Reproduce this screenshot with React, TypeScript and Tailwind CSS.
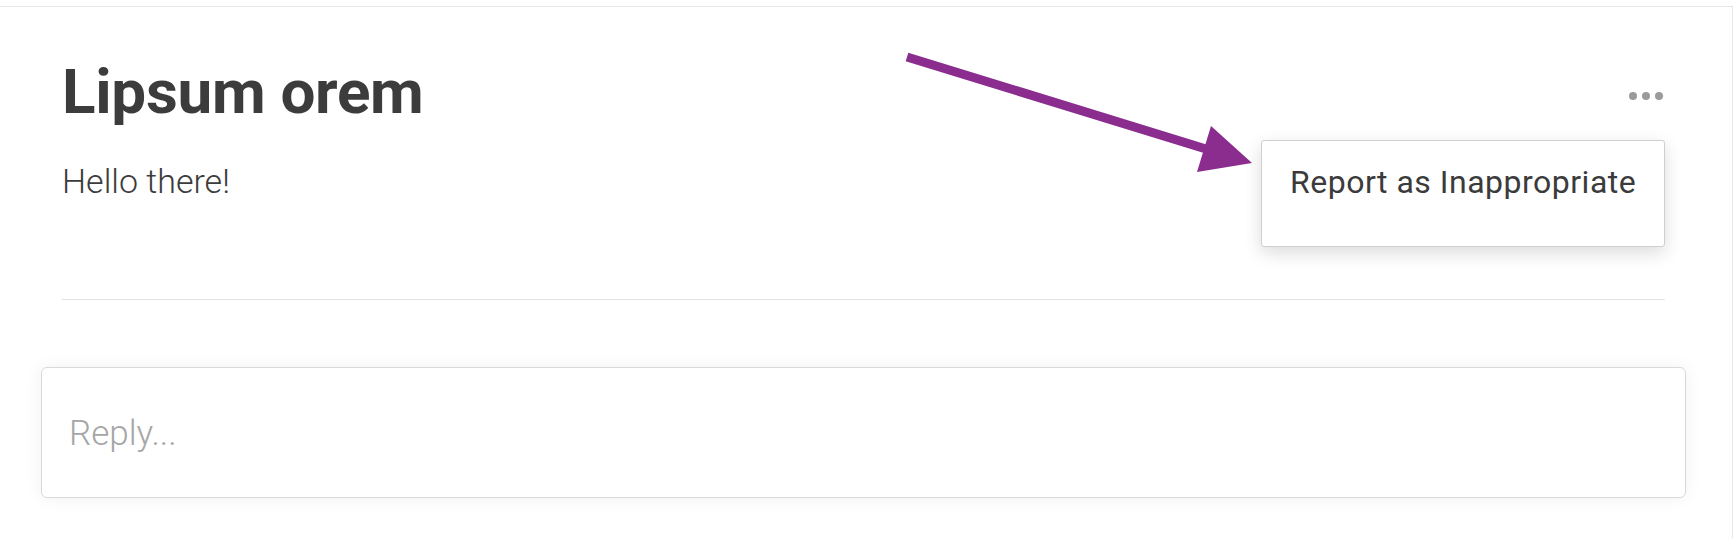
export default function App() {
    return (
        <div className="relative min-h-screen bg-white pt-[6px] font-['Roboto',sans-serif] text-[#3c3c3c]">
            <div className="relative w-[1733px] border-t border-r border-[#e6e6e6] pl-[62px] pr-[67px] pt-[54px] pb-[40px]">
                <div className="flex items-start justify-between">
                    <h2 className="text-[62px] font-bold leading-none tracking-[-0.3px]">
                        Lipsum orem
                    </h2>
                    <button className="mt-[31px] mr-[2px] flex items-center gap-[5px]">
                        <span className="h-[8px] w-[8px] rounded-full bg-[#9b9b9b]"/>
                        <span className="h-[8px] w-[8px] rounded-full bg-[#9b9b9b]"/>
                        <span className="h-[8px] w-[8px] rounded-full bg-[#9b9b9b]"/>
                    </button>
                </div>
                <p className="mt-[41px] text-[34px] font-light leading-none">
                    Hello there!
                </p>
                <div className="mt-[101px] h-px bg-[#e3e3e3]"/>
                <div className="-mx-[21px] mt-[67px] h-[131px] rounded-[6px] border-[1.5px] border-[#d9d9d9] bg-white pl-[27px] pt-[45px] shadow-[0_0_18px_rgba(0,0,0,0.06)]">
                    <input
                        placeholder="Reply..."
                        className="w-full bg-transparent text-[35px] font-light leading-none outline-none placeholder:text-[#a6a6a6]"
                    />
                </div>

                {/* menu opened from the dots */}
                <div className="absolute right-[67px] top-[133px] h-[107px] w-[404px] rounded-[3px] border-[1.5px] border-[#cfcfcf] bg-white pl-[28px] pt-[25px] shadow-[0_6px_18px_rgba(0,0,0,0.14)]">
                    <span className="text-[32px] leading-none tracking-[0.5px] text-[#3b3b3b]">
                        Report as Inappropriate
                    </span>
                </div>
            </div>

            {/* annotation arrow */}
            <svg className="absolute left-[900px] top-[45px] h-[135px] w-[360px]" viewBox="0 0 360 135">
                <line x1="7" y1="12" x2="306" y2="104" stroke="#8a2d8e" strokeWidth="9"/>
                <polygon points="311,81 297,127 352,118" fill="#8a2d8e"/>
            </svg>
        </div>
    );
};
